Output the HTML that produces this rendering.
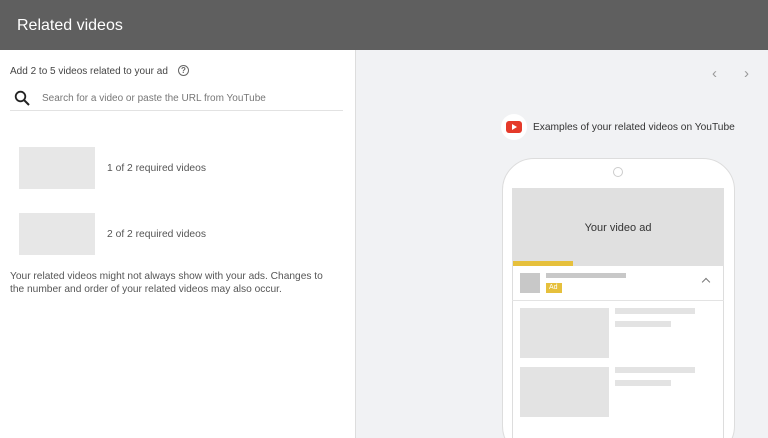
<!DOCTYPE html>
<html style="width:768px;height:438px;overflow:hidden"><head><style>
*{margin:0;padding:0;box-sizing:border-box}
body{width:768px;height:438px;overflow:hidden;font-family:"Liberation Sans",sans-serif;background:#f1f2f4;position:relative}
.a{position:absolute}
</style></head><body>
<div class="a" style="left:0;top:0;width:768px;height:50px;background:#5f5f5f;color:#fff;font-size:16px;padding:17px 0 0 17px">Related videos</div>
<div class="a" style="left:0;top:50px;width:356px;height:388px;background:#fff;border-right:1px solid #ddd"></div>
<div class="a" style="left:10px;top:66px;font-size:10px;color:#444">Add 2 to 5 videos related to your ad</div>
<div class="a" style="left:178px;top:65px;width:11px;height:11px;border:1.3px solid #666;border-radius:50%;font-size:8px;color:#666;text-align:center;line-height:9px;font-weight:bold">?</div>
<svg class="a" style="left:14px;top:90px" width="17" height="17" viewBox="0 0 17 17"><circle cx="6.5" cy="6.5" r="4.8" fill="none" stroke="#222" stroke-width="1.8"/><line x1="10" y1="10" x2="15" y2="15" stroke="#222" stroke-width="2"/></svg>
<div class="a" style="left:42px;top:93px;font-size:10px;color:#777">Search for a video or paste the URL from YouTube</div>
<div class="a" style="left:10px;top:110px;width:333px;height:1px;background:#e2e2e2"></div>
<div class="a" style="left:19px;top:147px;width:76px;height:42px;background:#e7e7e7"></div>
<div class="a" style="left:107px;top:163px;font-size:10.3px;color:#555">1 of 2 required videos</div>
<div class="a" style="left:19px;top:213px;width:76px;height:42px;background:#e7e7e7"></div>
<div class="a" style="left:107px;top:229px;font-size:10.3px;color:#555">2 of 2 required videos</div>
<div class="a" style="left:10px;top:270px;font-size:10.2px;color:#555;line-height:13px;width:322px">Your related videos might not always show with your ads. Changes to the number and order of your related videos may also occur.</div>
<div class="a" style="left:712px;top:65px;font-size:15px;color:#999">&#8249;</div>
<div class="a" style="left:744px;top:65px;font-size:15px;color:#999">&#8250;</div>
<div class="a" style="left:501px;top:114px;width:26px;height:26px;border-radius:50%;background:#fff"></div>
<div class="a" style="left:506px;top:121px;width:16px;height:12px;border-radius:3px;background:#e53a2a"></div>
<div class="a" style="left:512px;top:124px;width:0;height:0;border-left:5px solid #fff;border-top:3px solid transparent;border-bottom:3px solid transparent"></div>
<div class="a" style="left:533px;top:122px;font-size:10.2px;color:#333">Examples of your related videos on YouTube</div>
<div class="a" style="left:502px;top:158px;width:233px;height:300px;background:#fff;border:1.5px solid #ddd;border-radius:32px"></div>
<div class="a" style="left:613px;top:167px;width:10px;height:10px;border:1px solid #ccc;border-radius:50%"></div>
<div class="a" style="left:512px;top:188px;width:212px;height:260px;border:1px solid #ddd;background:#fff"></div>
<div class="a" style="left:512px;top:188px;width:212px;height:78px;background:#e0e0e0;font-size:11px;color:#333;text-align:center;padding-top:34px">Your video ad</div>
<div class="a" style="left:513px;top:261px;width:60px;height:5px;background:#e6c03c"></div>
<div class="a" style="left:520px;top:273px;width:20px;height:20px;background:#c8c8c8"></div>
<div class="a" style="left:546px;top:273px;width:80px;height:5px;background:#c8c8c8"></div>
<div class="a" style="left:546px;top:283px;width:16px;height:10px;background:#e6c03c;color:#fff;font-size:7px;padding:1px 0 0 3px">Ad</div>
<div class="a" style="left:703px;top:279px;width:6px;height:6px;border-left:1.5px solid #777;border-top:1.5px solid #777;transform:rotate(45deg)"></div>
<div class="a" style="left:512px;top:300px;width:212px;height:1px;background:#e3e3e3"></div>
<div class="a" style="left:520px;top:308px;width:89px;height:50px;background:#e3e3e3"></div>
<div class="a" style="left:615px;top:308px;width:80px;height:6px;background:#e3e3e3"></div>
<div class="a" style="left:615px;top:321px;width:56px;height:6px;background:#e3e3e3"></div>
<div class="a" style="left:520px;top:367px;width:89px;height:50px;background:#e3e3e3"></div>
<div class="a" style="left:615px;top:367px;width:80px;height:6px;background:#e3e3e3"></div>
<div class="a" style="left:615px;top:380px;width:56px;height:6px;background:#e3e3e3"></div>
</body></html>
